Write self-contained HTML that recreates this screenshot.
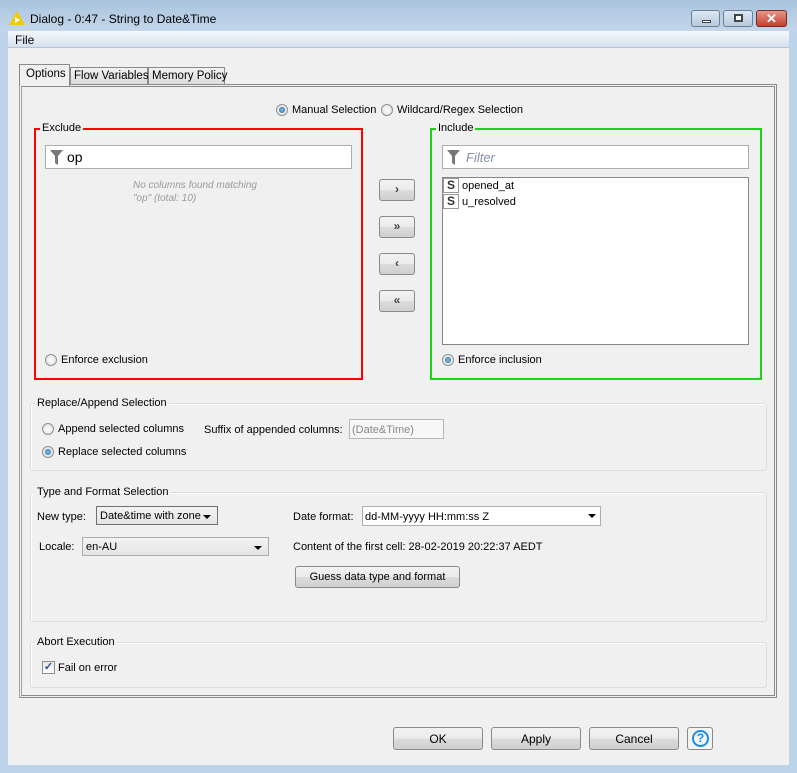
<!DOCTYPE html>
<html><head><style>
*{box-sizing:border-box}
body{margin:0;width:797px;height:773px;overflow:hidden;background:#bdd3ea;font-family:"Liberation Sans",sans-serif;font-size:11px;color:#000;position:relative}
.a{position:absolute}
.t{position:absolute;white-space:nowrap;margin-top:1px}
.btn{position:absolute;border:1px solid #8a8a8a;border-radius:3px;background:linear-gradient(#f2f2f2 0%,#ebebeb 50%,#dcdcdc 51%,#cfcfcf 100%);text-align:center;font-size:12px}
.grp{position:absolute;border:1px solid #dcdcdc;border-radius:3px;box-shadow:inset 1px 1px 0 #fff}
.lg{position:absolute;background:#f0f0f0;padding:0 2px;font-size:11px;top:-7px;left:4px}
.radio{position:absolute;width:12px;height:12px;border-radius:50%;border:1px solid #8e8f8f;background:radial-gradient(#fff,#dcdcdc)}
.radio.on::after{content:"";position:absolute;left:2px;top:2px;width:6px;height:6px;border-radius:50%;background:radial-gradient(#7fc8f2,#1a5b93)}
.combo{position:absolute;border:1px solid #acacac;background:linear-gradient(#f3f3f3,#e4e4e4);font-size:11px;padding:3px 3px}
.combo::after{content:"";position:absolute;right:6px;top:8px;border:4px solid transparent;border-top:4px solid #000;border-bottom:0}
</style></head><body>
<div class="a" style="left:0;top:0;width:797px;height:31px;background:linear-gradient(#a9c4df,#c3d6ea)"></div>
<svg class="a" style="left:9px;top:11px" width="16" height="14"><polygon points="8,0 16,14 0,14" fill="#f5c800"/><polygon points="6,6 11,9 6,12" fill="#fff"/></svg>
<div class="t" style="left:30px;top:11px;font-size:12px">Dialog - 0:47 - String to Date&amp;Time</div>
<div class="a" style="left:691px;top:10px;width:29px;height:17px;border:1px solid #6d7f95;border-radius:3px;background:linear-gradient(#dce7f3,#b7c9dd)"><div class="a" style="left:10px;top:9px;width:9px;height:3px;background:#fff;border:1px solid #444"></div></div>
<div class="a" style="left:723px;top:10px;width:30px;height:17px;border:1px solid #6d7f95;border-radius:3px;background:linear-gradient(#dce7f3,#b7c9dd)"><div class="a" style="left:10px;top:3px;width:9px;height:8px;background:#fff;border:2px solid #444"></div></div>
<div class="a" style="left:756px;top:10px;width:31px;height:17px;border:1px solid #7a2b20;border-radius:3px;background:linear-gradient(#e6968a,#c24030);color:#fff;font-weight:bold;text-align:center;font-size:13px;line-height:15px">✕</div>
<div class="a" style="left:8px;top:31px;width:781px;height:734px;background:#f0f0f0"></div>
<div class="a" style="left:8px;top:31px;width:781px;height:17px;background:linear-gradient(#f5f8fc,#d6e0ee);border-bottom:1px solid #b6c3d4"></div>
<div class="t" style="left:15px;top:32px;font-size:12px">File</div>
<div class="a" style="left:19px;top:84px;width:758px;height:614px;border:3px double #8a8a8a;border-left-color:#a0a0a0"></div>
<div class="a" style="left:19px;top:64px;width:51px;height:22px;border:1px solid #8a8a8a;border-bottom:none;background:#f0f0f0"></div>
<div class="t" style="left:26px;top:67px;font-size:11.5px">Options</div>
<div class="a" style="left:70px;top:67px;width:78px;height:18px;border:1px solid #8a8a8a;background:linear-gradient(#f2f2f2,#dcdcdc)"></div>
<div class="t" style="left:74px;top:69px;font-size:11.5px">Flow Variables</div>
<div class="a" style="left:148px;top:67px;width:77px;height:18px;border:1px solid #8a8a8a;background:linear-gradient(#f2f2f2,#dcdcdc)"></div>
<div class="t" style="left:152px;top:69px;font-size:11.5px">Memory Policy</div>
<div class="radio on" style="left:276px;top:104px"></div><div class="t" style="left:292px;top:103px">Manual Selection</div>
<div class="radio" style="left:381px;top:104px"></div><div class="t" style="left:397px;top:103px">Wildcard/Regex Selection</div>
<div class="a" style="left:34px;top:128px;width:329px;height:252px;border:2px solid #f00"></div>
<div class="t" style="left:40px;top:121px;background:#f0f0f0;padding:0 2px">Exclude</div>
<div class="a" style="left:45px;top:145px;width:307px;height:24px;border:1px solid #abadb3;background:#fff"></div>
<svg class="a" style="left:50px;top:150px" width="14" height="15"><polygon points="0,0 13,0 8,6 8,15 5,13 5,6" fill="#777"/></svg>
<div class="t" style="left:67px;top:148px;font-size:14px">op</div>
<div class="t" style="left:133px;top:178px;color:#999;font-style:italic;font-size:10px;line-height:13px">No columns found matching<br>"op" (total: 10)</div>
<div class="radio" style="left:45px;top:354px"></div><div class="t" style="left:61px;top:353px">Enforce exclusion</div>
<div class="btn" style="left:379px;top:179px;width:36px;height:22px;line-height:19px;font-weight:bold;color:#444">›</div>
<div class="btn" style="left:379px;top:216px;width:36px;height:22px;line-height:19px;font-weight:bold;color:#444">»</div>
<div class="btn" style="left:379px;top:253px;width:36px;height:22px;line-height:19px;font-weight:bold;color:#444">‹</div>
<div class="btn" style="left:379px;top:290px;width:36px;height:22px;line-height:19px;font-weight:bold;color:#444">«</div>
<div class="a" style="left:430px;top:128px;width:332px;height:252px;border:2px solid #1ed21e"></div>
<div class="t" style="left:436px;top:121px;background:#f0f0f0;padding:0 2px">Include</div>
<div class="a" style="left:442px;top:145px;width:307px;height:24px;border:1px solid #abadb3;background:#fff"></div>
<svg class="a" style="left:447px;top:150px" width="14" height="15"><polygon points="0,0 13,0 8,6 8,15 5,13 5,6" fill="#777"/></svg>
<div class="t" style="left:466px;top:149px;font-size:13px;color:#8090a8;font-style:italic">Filter</div>
<div class="a" style="left:442px;top:177px;width:307px;height:168px;border:1px solid #828790;background:#fff"></div>
<div class="a" style="left:443px;top:178px;width:16px;height:15px;border:1px solid #999;font-weight:bold;font-size:12px;text-align:center;line-height:13px;color:#333">S</div>
<div class="t" style="left:462px;top:179px">opened_at</div>
<div class="a" style="left:443px;top:194px;width:16px;height:15px;border:1px solid #999;font-weight:bold;font-size:12px;text-align:center;line-height:13px;color:#333">S</div>
<div class="t" style="left:462px;top:195px">u_resolved</div>
<div class="radio on" style="left:442px;top:354px"></div><div class="t" style="left:458px;top:353px">Enforce inclusion</div>
<div class="grp" style="left:30px;top:403px;width:737px;height:68px"><div class="lg">Replace/Append Selection</div></div>
<div class="radio" style="left:42px;top:423px"></div><div class="t" style="left:58px;top:422px">Append selected columns</div>
<div class="radio on" style="left:42px;top:446px"></div><div class="t" style="left:58px;top:445px">Replace selected columns</div>
<div class="t" style="left:204px;top:423px">Suffix of appended columns:</div>
<div class="a" style="left:349px;top:419px;width:95px;height:20px;border:1px solid #b5b5b5;background:#f7f7f7;color:#888;padding:4px 2px;font-size:11px">(Date&amp;Time)</div>
<div class="grp" style="left:30px;top:492px;width:737px;height:130px"><div class="lg">Type and Format Selection</div></div>
<div class="t" style="left:37px;top:510px">New type:</div>
<div class="combo" style="left:96px;top:506px;width:122px;height:19px;border-color:#707070">Date&amp;time with zone</div>
<div class="t" style="left:39px;top:540px">Locale:</div>
<div class="combo" style="left:82px;top:537px;width:187px;height:19px">en-AU</div>
<div class="t" style="left:293px;top:510px">Date format:</div>
<div class="a" style="left:362px;top:506px;width:239px;height:20px;border:1px solid #acacac;background:#fff;padding:4px 2px;font-size:11px">dd-MM-yyyy HH:mm:ss Z</div>
<div class="a" style="left:588px;top:514px;border:4px solid transparent;border-top:4px solid #000;border-bottom:0"></div>
<div class="t" style="left:293px;top:540px">Content of the first cell: 28-02-2019 20:22:37 AEDT</div>
<div class="btn" style="left:295px;top:566px;width:165px;height:22px;line-height:21px;font-size:11px">Guess data type and format</div>
<div class="grp" style="left:30px;top:642px;width:737px;height:46px"><div class="lg">Abort Execution</div></div>
<div class="a" style="left:42px;top:661px;width:13px;height:13px;border:1px solid #8e8f8f;background:linear-gradient(#e6e6e6,#fff);color:#2a4c9a;font-size:11px;line-height:11px;text-align:center;font-weight:bold">✓</div>
<div class="t" style="left:58px;top:661px">Fail on error</div>
<div class="btn" style="left:393px;top:727px;width:90px;height:23px;line-height:22px">OK</div>
<div class="btn" style="left:491px;top:727px;width:90px;height:23px;line-height:22px">Apply</div>
<div class="btn" style="left:589px;top:727px;width:90px;height:23px;line-height:22px">Cancel</div>
<div class="btn" style="left:687px;top:727px;width:26px;height:23px;background:#f4f4f4"><div class="a" style="left:4px;top:2px;width:17px;height:17px;border:2px solid #1a8ee6;border-radius:50%;color:#1a8ee6;font-weight:bold;font-size:12px;line-height:13px">?</div></div>
</body></html>
